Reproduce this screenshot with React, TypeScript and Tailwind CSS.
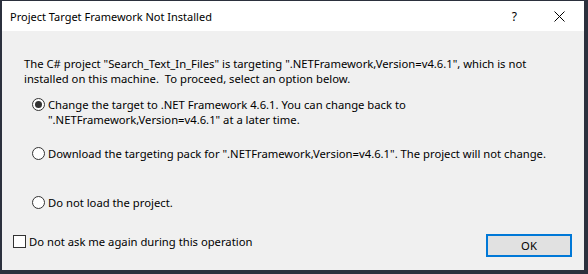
import React, { useState } from "react";

const font = { fontFamily: '"Noto Sans", "Open Sans", sans-serif' };

const Radio: React.FC<{ checked: boolean; onClick: () => void }> = ({ checked, onClick }) => (
  <button
    onClick={onClick}
    className="mt-[1px] flex h-[13px] w-[13px] shrink-0 items-center justify-center rounded-full border border-[#333333] bg-white"
  >
    {checked && <span className="block h-[7px] w-[7px] rounded-full bg-[#333333]" />}
  </button>
);

export default function App() {
  const [choice, setChoice] = useState(0);
  const [dontAsk, setDontAsk] = useState(false);

  return (
    <div
      className="flex h-[274px] w-[588px] flex-col bg-[#2b303d] pb-[4px] pl-[2px] pr-[4px] pt-[1px] text-[11.25px] text-black"
      style={font}
    >
      {/* Title bar */}
      <div className="flex h-[30px] shrink-0 items-center bg-white pl-[8px]">
        <span className="flex-1 text-[11px] leading-[15px]">Project Target Framework Not Installed</span>
        <span className="mr-[37px] text-[12px] leading-[15px]">?</span>
        <svg width="11" height="11" viewBox="0 0 11 11" className="mr-[19px]">
          <path d="M0.5 0.5 L10.5 10.5 M10.5 0.5 L0.5 10.5" stroke="#000" strokeWidth="1" />
        </svg>
      </div>

      {/* Body */}
      <div className="flex flex-1 flex-col bg-[#f0f0f0] pl-[22px] pt-[25px] leading-[15px]">
        <p>
          The C# project "Search_Text_In_Files" is targeting ".NETFramework,Version=v4.6.1", which is not
          <br />
          installed on this machine.&nbsp; To proceed, select an option below.
        </p>

        <div className="ml-[8px] mt-[11px] flex gap-[3px]">
          <Radio checked={choice === 0} onClick={() => setChoice(0)} />
          <div>
            Change the target to .NET Framework 4.6.1. You can change back to
            <br />
            ".NETFramework,Version=v4.6.1" at a later time.
          </div>
        </div>

        <div className="ml-[8px] mt-[19px] flex gap-[3px]">
          <Radio checked={choice === 1} onClick={() => setChoice(1)} />
          <div>Download the targeting pack for ".NETFramework,Version=v4.6.1". The project will not change.</div>
        </div>

        <div className="ml-[8px] mt-[34px] flex gap-[3px]">
          <Radio checked={choice === 2} onClick={() => setChoice(2)} />
          <div>Do not load the project.</div>
        </div>

        <div className="-ml-[11px] mt-[24px] flex items-start pr-[12px]">
          <button onClick={() => setDontAsk((v) => !v)} className="mt-[1px] flex h-[13px] w-[13px] shrink-0 items-center justify-center border border-[#333333] bg-white">
            {dontAsk && (
              <svg width="9" height="9" viewBox="0 0 9 9">
                <path d="M1 4.5 L3.5 7 L8 1.5" stroke="#000" strokeWidth="1.4" fill="none" />
              </svg>
            )}
          </button>
          <span className="ml-[3px] flex-1">Do not ask me again during this operation</span>
          <button className="h-[23px] w-[86px] border-2 border-[#0078d7] bg-[#e1e1e1] text-[11.25px] leading-[15px]">OK</button>
        </div>
      </div>
    </div>
  );
}
